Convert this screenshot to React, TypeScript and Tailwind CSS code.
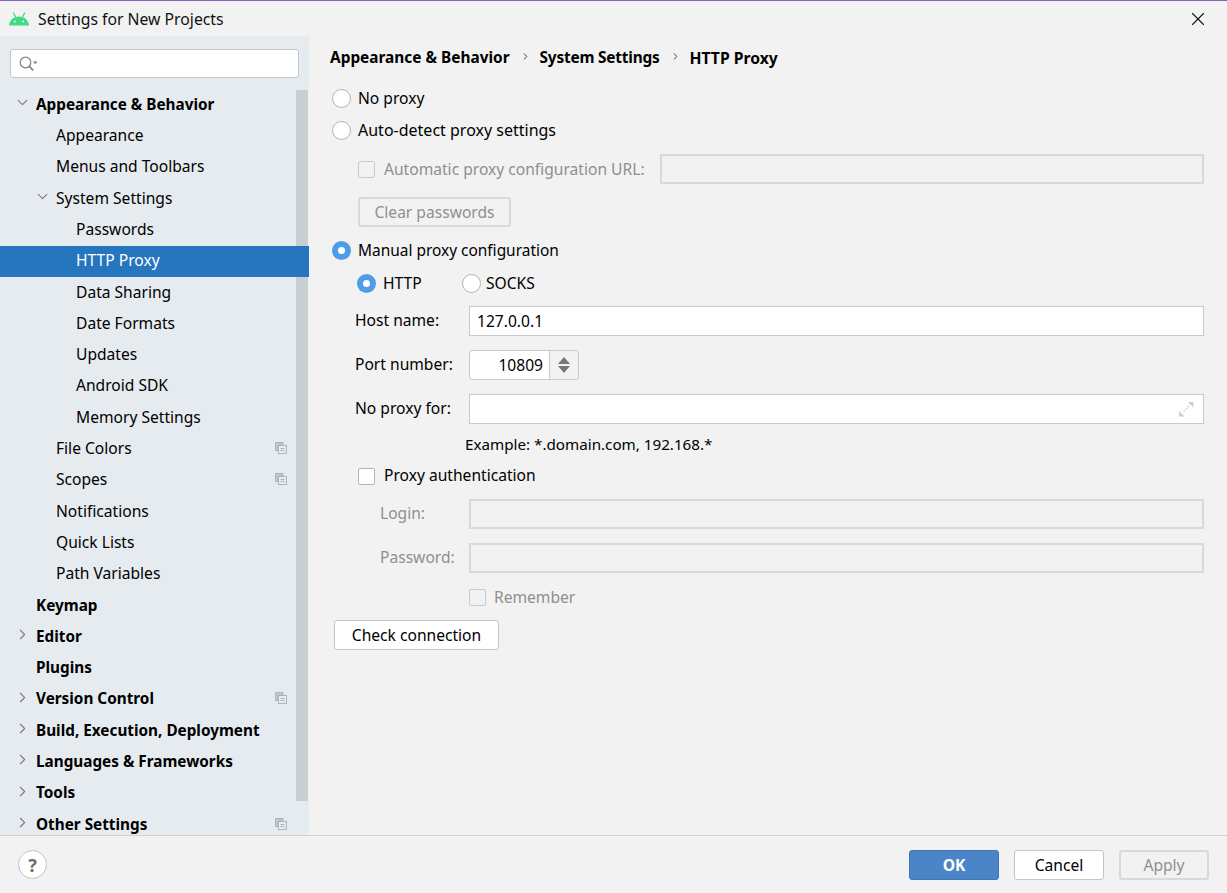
import { X, ChevronRight, ChevronDown } from "lucide-react";

const FONT = "font-['Noto_Sans','Open_Sans',sans-serif]";

type Row = { label: string; depth: number; bold?: boolean; arrow?: "open" | "closed"; copy?: boolean; selected?: boolean };

const rows: Row[] = [
  { label: "Appearance & Behavior", depth: 0, bold: true, arrow: "open" },
  { label: "Appearance", depth: 1 },
  { label: "Menus and Toolbars", depth: 1 },
  { label: "System Settings", depth: 1, arrow: "open" },
  { label: "Passwords", depth: 2 },
  { label: "HTTP Proxy", depth: 2, selected: true },
  { label: "Data Sharing", depth: 2 },
  { label: "Date Formats", depth: 2 },
  { label: "Updates", depth: 2 },
  { label: "Android SDK", depth: 2 },
  { label: "Memory Settings", depth: 2 },
  { label: "File Colors", depth: 1, copy: true },
  { label: "Scopes", depth: 1, copy: true },
  { label: "Notifications", depth: 1 },
  { label: "Quick Lists", depth: 1 },
  { label: "Path Variables", depth: 1 },
  { label: "Keymap", depth: 0, bold: true },
  { label: "Editor", depth: 0, bold: true, arrow: "closed" },
  { label: "Plugins", depth: 0, bold: true },
  { label: "Version Control", depth: 0, bold: true, arrow: "closed", copy: true },
  { label: "Build, Execution, Deployment", depth: 0, bold: true, arrow: "closed" },
  { label: "Languages & Frameworks", depth: 0, bold: true, arrow: "closed" },
  { label: "Tools", depth: 0, bold: true, arrow: "closed" },
  { label: "Other Settings", depth: 0, bold: true, arrow: "closed", copy: true },
];

const AndroidLogo = () => (
  <svg width="20" height="14" viewBox="0 0 20 14" className="shrink-0">
    <path d="M0 13.5C0.4 8.6 4.4 4.6 10 4.6S19.6 8.6 20 13.5Z" fill="#3ddc84" />
    <path d="M4.4 1L6.6 5M15.6 1L13.4 5" stroke="#3ddc84" strokeWidth="1.3" strokeLinecap="round" />
    <circle cx="5.8" cy="9.6" r="1" fill="#f2f2f2" />
    <circle cx="14.2" cy="9.6" r="1" fill="#f2f2f2" />
  </svg>
);

const CopyIcon = () => (
  <svg width="12" height="12" viewBox="0 0 12 12" className="shrink-0">
    <path d="M0.5 0.5H8V3H3V8.5H0.5Z" fill="#c3cad1" stroke="#a9b2ba" />
    <rect x="3.5" y="3.5" width="8" height="8" fill="#e6ebf0" stroke="#adb6be" />
    <path d="M5.5 6.5H9.5M5.5 8.5H9.5" stroke="#adb6be" />
  </svg>
);

const SearchIcon = () => (
  <svg width="20" height="18" viewBox="0 0 20 18" className="shrink-0">
    <circle cx="7.5" cy="7.5" r="5.3" fill="none" stroke="#7b8288" strokeWidth="1.2" />
    <path d="M11.3 11.4L15.2 15.4" stroke="#7b8288" strokeWidth="1.6" />
    <path d="M15 6.5H19.5L17.2 9.2Z" fill="#7b8288" />
  </svg>
);

const ExpandIcon = () => (
  <svg width="16" height="16" viewBox="0 0 16 16">
    <path d="M10 1H15.5V6.5Z M1 15.5V10L6.5 15.5Z" fill="#c9d0d5" />
    <path d="M5.5 10.5L11 5" stroke="#c9d0d5" strokeWidth="1.3" strokeDasharray="2 1" />
  </svg>
);

const Radio = ({ checked }: { checked?: boolean }) =>
  checked ? (
    <span className="flex size-[19px] shrink-0 items-center justify-center rounded-full bg-[#4e9de6]">
      <span className="size-[7px] rounded-full bg-white" />
    </span>
  ) : (
    <span className="size-[19px] shrink-0 rounded-full border border-[#b4b4b4] bg-white" />
  );

const Checkbox = ({ disabled }: { disabled?: boolean }) => (
  <span className={`size-[17px] shrink-0 rounded-[2px] border ${disabled ? "border-[#c9c9c9] bg-[#f2f2f2]" : "border-[#b4b4b4] bg-white"}`} />
);

const TreeRow = ({ row }: { row: Row }) => {
  const pad = row.depth === 0 ? "pl-[36px]" : row.depth === 1 ? "pl-[56px]" : "pl-[76px]";
  return (
    <div className={`relative flex h-[31.3px] items-center pr-[22px] pb-[2px] ${pad} ${row.selected ? "bg-[#2675bf] text-white" : "text-black"} ${row.bold ? "text-[15.3px] font-bold" : ""}`}>
      {row.arrow && (
        <span className={`absolute top-[5px] text-[#777b7f] ${row.depth === 0 ? "left-[14px]" : "left-[34px]"}`}>
          {row.arrow === "open" ? <ChevronDown size={17} strokeWidth={1.5} /> : <ChevronRight size={17} strokeWidth={1.5} />}
        </span>
      )}
      <span className="flex-1 whitespace-nowrap">{row.label}</span>
      {row.copy && <CopyIcon />}
    </div>
  );
};

const Sidebar = () => (
  <aside className="relative flex w-[309px] shrink-0 flex-col overflow-hidden bg-[#e6ebf0]">
    <div className="px-[10px] pt-[13px] pb-[11.15px]">
      <div className="flex h-[29px] w-[289px] items-center rounded-[3px] border border-[#c4c7ca] bg-white pl-[7px]">
        <SearchIcon />
      </div>
    </div>
    {/* scrollbar lies under the tree rows */}
    <div className="absolute top-[54px] right-0 h-[711px] w-[13px] border-r border-[#f0f2f4] bg-[#c9ced3]" />
    <div>
      {rows.map((r) => (
        <TreeRow key={r.label} row={r} />
      ))}
    </div>
  </aside>
);

const Crumb = () => <ChevronRight size={11} strokeWidth={2} className="mx-[10px] -mt-[2px] text-[#333]" />;

const DisabledBox = ({ className }: { className: string }) => (
  <div className={`h-[30px] border-2 border-[#d9d9d9] bg-[#f2f2f2] ${className}`} />
);

const Content = () => (
  <main className="flex flex-1 flex-col pr-[23px] pl-[21px]">
    <div className="flex h-[43px] items-center font-bold whitespace-nowrap">
      <span className="text-[15.4px]">Appearance &amp; Behavior</span>
      <Crumb />
      <span className="ml-[-1px] text-[15.4px] tracking-[-0.2px]">System Settings</span>
      <Crumb />
      <span className="ml-[-1px] text-[15.7px]">HTTP Proxy</span>
    </div>

    <div className="mt-[3px] flex h-[32px] items-center gap-[7px] pl-[2px]">
      <Radio />
      No proxy
    </div>
    <div className="flex h-[32px] items-center gap-[7px] pl-[2px]">
      <Radio />
      <span className="text-[16px]">Auto-detect proxy settings</span>
    </div>

    <div className="mt-[8px] flex h-[30px] items-center pl-[28px] text-[#8f8f8f]">
      <Checkbox disabled />
      <span className="ml-[9px] whitespace-nowrap">Automatic proxy configuration URL:</span>
      <DisabledBox className="ml-[15px] flex-1" />
    </div>

    <div className="mt-[13px] pl-[28px]">
      <div className="flex h-[30px] w-[153px] items-center justify-center rounded-[3px] border-2 border-[#d9d9d9] text-[#8f8f8f]">
        Clear passwords
      </div>
    </div>

    <div className="mt-[7px] flex h-[32px] items-center gap-[7px] pl-[2px]">
      <Radio checked />
      <span className="text-[15.45px]">Manual proxy configuration</span>
    </div>

    <div className="mt-[1px] flex h-[32px] items-center pl-[27px]">
      <Radio checked />
      <span className="ml-[7px] w-[78px]">HTTP</span>
      <span className="ml-px flex">
        <Radio />
      </span>
      <span className="ml-[5px]">SOCKS</span>
    </div>

    <div className="mt-[7px] flex h-[30px] items-center pl-[25px]">
      <span className="w-[114px] pb-[2px] whitespace-nowrap">Host name:</span>
      <div className="flex h-[30px] flex-1 items-center border border-[#c9c9c9] bg-white pl-[7px]">127.0.0.1</div>
    </div>

    <div className="mt-[14px] flex h-[30px] items-center pl-[25px]">
      <span className="w-[114px] pb-[2px] whitespace-nowrap">Port number:</span>
      <div className="flex h-[30px] w-[110px] rounded-[3px] border border-[#c9c9c9] bg-white">
        <span className="flex flex-1 items-center justify-end border-r border-[#c9c9c9] pr-[6px]">10809</span>
        <span className="flex w-[28px] flex-col items-center justify-center gap-[2px] rounded-r-[3px] bg-[#f2f2f2]">
          <span className="size-0 border-x-[6px] border-b-[7px] border-x-transparent border-b-[#777]" />
          <span className="size-0 border-x-[6px] border-t-[7px] border-x-transparent border-t-[#777]" />
        </span>
      </div>
    </div>

    <div className="mt-[14px] flex h-[30px] items-center pl-[25px]">
      <span className="w-[114px] pb-[2px] whitespace-nowrap">No proxy for:</span>
      <div className="flex h-[30px] flex-1 items-center justify-end border border-[#c9c9c9] bg-white pr-[9px]">
        <ExpandIcon />
      </div>
    </div>

    <div className="mt-[6px] flex h-[28px] items-center pl-[135px] text-[15.2px] whitespace-nowrap">Example: *.domain.com, 192.168.*</div>

    <div className="mt-[2px] flex h-[32px] items-center pl-[28px]">
      <Checkbox />
      <span className="ml-[9px] pb-[2px]">Proxy authentication</span>
    </div>

    <div className="mt-[7px] flex h-[30px] items-center pl-[50px] text-[#8f8f8f]">
      <span className="w-[89px] pb-[2px]">Login:</span>
      <DisabledBox className="flex-1" />
    </div>
    <div className="mt-[14px] flex h-[30px] items-center pl-[50px] text-[#8f8f8f]">
      <span className="w-[89px] pb-[2px]">Password:</span>
      <DisabledBox className="flex-1" />
    </div>

    <div className="mt-[9px] flex h-[30px] items-center pl-[139px] text-[#8f8f8f]">
      <Checkbox disabled />
      <span className="ml-[8px]">Remember</span>
    </div>

    <div className="mt-[8px] pl-[4px]">
      <div className="flex h-[30px] w-[165px] items-center justify-center rounded-[3px] border border-[#c4c4c4] bg-white">
        Check connection
      </div>
    </div>
  </main>
);

export default function App() {
  return (
    <div className={`flex h-[893px] w-[1227px] flex-col overflow-hidden bg-[#f2f2f2] text-[15.6px] leading-[24px] text-black ${FONT}`}>
      <div className="h-px bg-[#8a5fb8]" />
      <header className="flex h-[35px] items-center pr-[18px] pl-[9px]">
        <AndroidLogo />
        <span className="ml-[9px] flex-1 text-[15.75px] text-[#111]">Settings for New Projects</span>
        <X size={22} strokeWidth={1.2} className="text-[#111]" />
      </header>

      <div className="flex h-[799px]">
        <Sidebar />
        <Content />
      </div>

      <footer className="flex h-[58px] items-center border-t border-[#d1d1d1] pr-[18px] pl-[18px]">
        <span className="flex size-[29px] items-center justify-center rounded-full border border-[#c4c4c4] bg-white text-[18px] font-bold text-[#6e6e6e]">?</span>
        <div className="flex-1" />
        <div className="flex h-[30px] w-[90px] items-center justify-center rounded-[3px] border border-[#3f76b3] bg-[#4a86c7] font-bold text-white">OK</div>
        <div className="ml-[15px] flex h-[30px] w-[90px] items-center justify-center rounded-[3px] border border-[#c4c4c4] bg-white">Cancel</div>
        <div className="ml-[15px] flex h-[30px] w-[90px] items-center justify-center rounded-[3px] border-2 border-[#d9d9d9] text-[#8f8f8f]">Apply</div>
      </footer>
    </div>
  );
}
